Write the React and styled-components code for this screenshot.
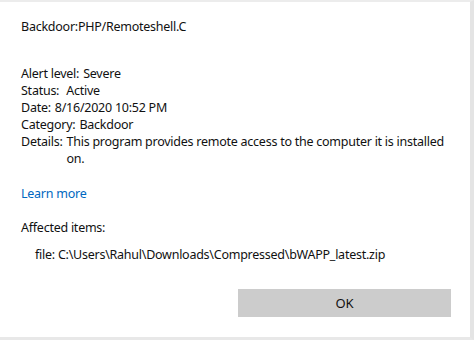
import React from 'react';
import styled, { createGlobalStyle } from 'styled-components';

const GlobalStyle = createGlobalStyle`
  html, body {
    margin: 0;
    padding: 0;
    background: #ffffff;
  }
  * { box-sizing: border-box; }
`;

const Frame = styled.div`
  width: 474px;
  height: 340px;
  background: #ffffff;
  border-top: 2px solid #ececec;
  border-right: 4px solid #e4e4e4;
  border-bottom: 3px solid #e8e8e8;
  font-family: 'Noto Sans', 'Open Sans', sans-serif;
  font-size: 12.5px;
  letter-spacing: -0.25px;
  line-height: 17px;
  color: #111111;
  display: flex;
  flex-direction: column;
  padding: 16px 20px 0 21px;
`;

const Title = styled.div`
  margin-bottom: 30px;
`;

const Row = styled.div`
  display: flex;
`;

const Label = styled.span`
  white-space: nowrap;
  margin-right: ${(p) => p.gap || 4}px;
`;

const Value = styled.span``;

const LinkText = styled.a`
  color: #0067c0;
  text-decoration: none;
  margin-top: 18px;
  align-self: flex-start;
`;

const Section = styled.div`
  margin-top: 17px;
`;

const FileLine = styled.div`
  margin-top: 10px;
  padding-left: 14px;
`;

const Footer = styled.div`
  display: flex;
  justify-content: flex-end;
  margin-top: auto;
  padding-bottom: 20px;
  margin-right: -1px;
`;

const OkButton = styled.button`
  width: 213px;
  height: 28px;
  border: none;
  background: #cccccc;
  font-family: inherit;
  font-size: 13px;
  color: #111111;
  padding: 0;
`;

const details = [
  { label: 'Alert level:', value: 'Severe' },
  { label: 'Status:', value: 'Active', gap: 7 },
  { label: 'Date:', value: '8/16/2020 10:52 PM' },
  { label: 'Category:', value: 'Backdoor' },
  { label: 'Details:', value: 'This program provides remote access to the computer it is installed on.' },
];

const App = () => (
  <>
    <GlobalStyle />
    <Frame>
      <Title>Backdoor:PHP/Remoteshell.C</Title>
      {details.map((d) => (
        <Row key={d.label}>
          <Label gap={d.gap}>{d.label}</Label>
          <Value>{d.value}</Value>
        </Row>
      ))}
      <LinkText href="#">Learn more</LinkText>
      <Section>Affected items:</Section>
      <FileLine>file: C:\Users\Rahul\Downloads\Compressed\bWAPP_latest.zip</FileLine>
      <Footer>
        <OkButton>OK</OkButton>
      </Footer>
    </Frame>
  </>
);

export default App;
